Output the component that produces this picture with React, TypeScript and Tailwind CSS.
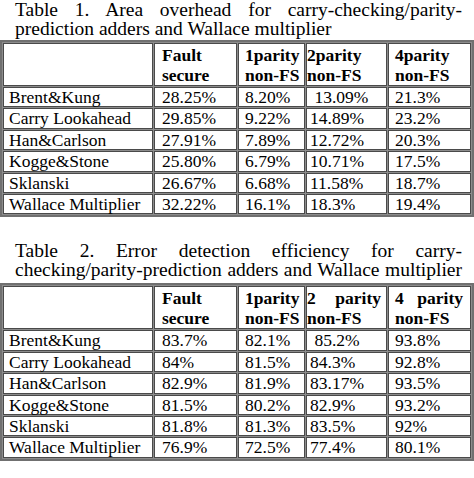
const serifCls = "font-['Liberation_Serif','Times_New_Roman','DejaVu_Serif',serif]"

type Row = [string, string, string, string, string]

const TABLE_1: Row[] = [
  ['Brent&Kung', '28.25%', '8.20%', '\u00a013.09%', '21.3%'],
  ['Carry Lookahead', '29.85%', '9.22%', '14.89%', '23.2%'],
  ['Han&Carlson', '27.91%', '7.89%', '12.72%', '20.3%'],
  ['Kogge&Stone', '25.80%', '6.79%', '10.71%', '17.5%'],
  ['Sklanski', '26.67%', '6.68%', '11.58%', '18.7%'],
  ['Wallace Multiplier', '32.22%', '16.1%', '18.3%', '19.4%'],
]

const TABLE_2: Row[] = [
  ['Brent&Kung', '83.7%', '82.1%', '\u00a085.2%', '93.8%'],
  ['Carry Lookahead', '84%', '81.5%', '84.3%', '92.8%'],
  ['Han&Carlson', '82.9%', '81.9%', '83.17%', '93.5%'],
  ['Kogge&Stone', '81.5%', '80.2%', '82.9%', '93.2%'],
  ['Sklanski', '81.8%', '81.3%', '83.5%', '92%'],
  ['Wallace Multiplier', '76.9%', '72.5%', '77.4%', '80.1%'],
]

// padding per column, the source table is a bit uneven
const PAD = ['pl-[5px]', 'pl-[7px]', 'pl-[6px]', 'pl-[3px]', 'pl-[6px]']
const HEAD_PAD = ['pl-[5px]', 'pl-[7px]', 'pl-[6px]', 'pl-0 pr-[5px]', 'pl-[6px] pr-[7px]']
const WIDTHS = ['w-[150px]', 'w-[83px]', 'w-[67px]', 'w-[81px]', 'w-[83px]']

const cell = 'border border-[#4a4a4a] bg-white align-top text-left'

const Title = ({ first, second, full }: { first: string; second: string; full?: boolean }) => (
  <div className={`pl-[15px] pr-[12px] text-[19.5px] leading-[19px] text-black ${serifCls}`}>
    <div className="text-justify [text-align-last:justify] whitespace-nowrap">{first}</div>
    <div className={full ? 'text-justify [text-align-last:justify] whitespace-nowrap' : 'whitespace-nowrap'}>
      {second}
    </div>
  </div>
)

const DataTable = ({ rows, spaced }: { rows: Row[]; spaced?: boolean }) => {
  const heads: [string, string][] = [
    ['Fault', 'secure'],
    ['1parity', 'non-FS'],
    [spaced ? '2 parity' : '2parity', 'non-FS'],
    [spaced ? '4 parity' : '4parity', 'non-FS'],
  ]

  return (
    <table
      className={`w-[474px] table-fixed border-separate border-spacing-[1px] border-2 border-[#707070] bg-[#8c8c8c] text-black text-[17.5px] ${serifCls}`}
    >
      <thead>
        <tr>
          <th className={`${cell} ${WIDTHS[0]} h-[43px]`} />
          {heads.map(([a, b], i) => (
            <th key={a} className={`${cell} ${WIDTHS[i + 1]} ${HEAD_PAD[i + 1]} pt-px font-bold leading-[20px]`}>
              {a.includes(' ') ? (
                <div className="flex justify-between">
                  {a.split(' ').map((w) => (
                    <span key={w}>{w}</span>
                  ))}
                </div>
              ) : (
                <div>{a}</div>
              )}
              <div>{b}</div>
            </th>
          ))}
        </tr>
      </thead>
      <tbody>
        {rows.map((r) => (
          <tr key={r[0]}>
            {r.map((v, i) => (
              <td key={i} className={`${cell} ${PAD[i]} leading-[18.4px] whitespace-nowrap`}>
                {v}
              </td>
            ))}
          </tr>
        ))}
      </tbody>
    </table>
  )
}

export default function App() {
  return (
    <div className="w-[474px] h-[478px] bg-white overflow-hidden">
      <Title first="Table 1. Area overhead for carry-checking/parity-" second="prediction adders and Wallace multiplier" />
      <div className="mt-[2px]">
        <DataTable rows={TABLE_1} />
      </div>

      <div className="mt-[24px]">
        <Title
          first="Table 2. Error detection efficiency for carry-"
          second="checking/parity-prediction adders and Wallace multiplier"
          full
        />
      </div>
      <div className="mt-[4px]">
        <DataTable rows={TABLE_2} spaced />
      </div>
    </div>
  )
}
